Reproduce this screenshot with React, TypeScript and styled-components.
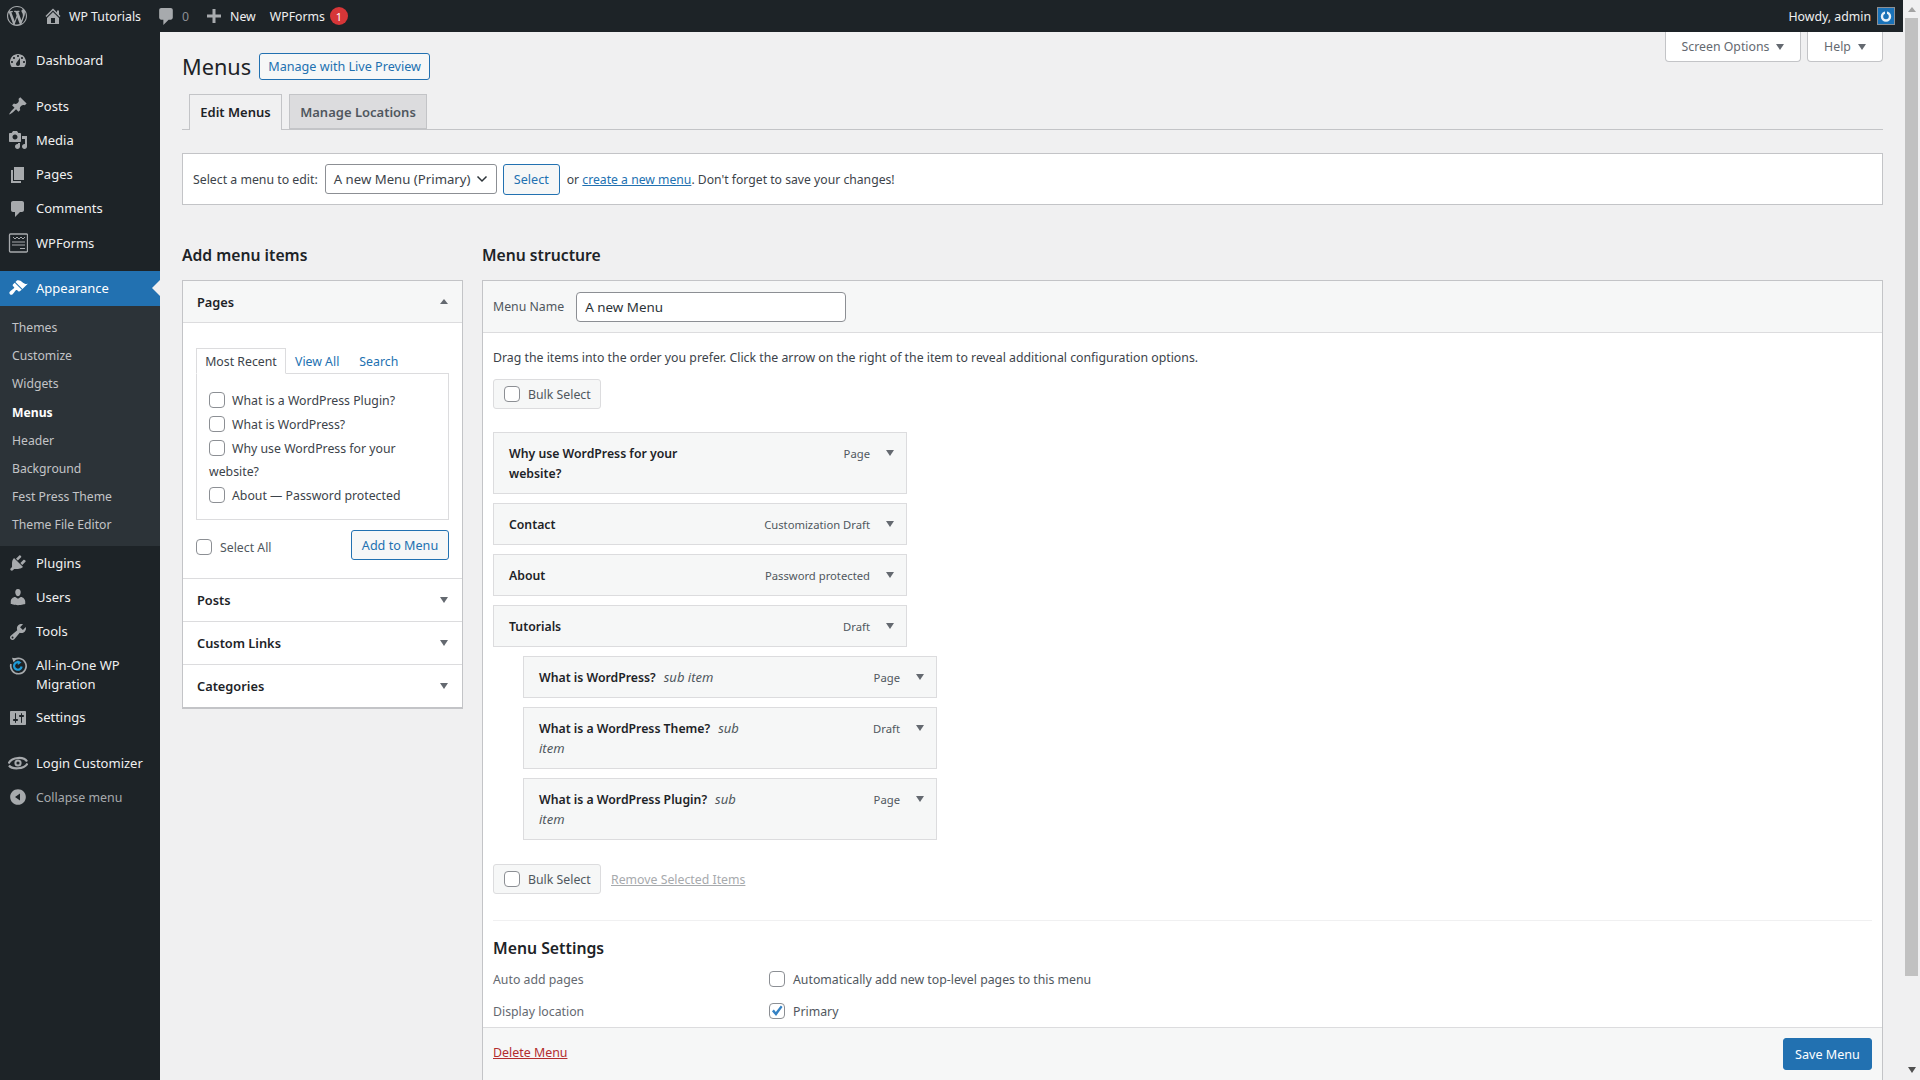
import React from 'react'
import styled, { createGlobalStyle } from 'styled-components'

const FONT = '"Noto Sans", "Open Sans", Arial, sans-serif'

const GlobalStyle = createGlobalStyle`
  html, body {
    margin: 0;
    height: 100%;
    overflow: hidden;
    background: #f0f0f1;
  }
  * {
    box-sizing: border-box;
  }
  body {
    font-family: ${FONT};
    font-size: 12.3px;
    color: #3c434a;
  }
`

const Page = styled.div`
  display: flex;
  width: 1920px;
  height: 1080px;
  overflow: hidden;
`

const Screen = styled.div`
  flex: 1;
  min-width: 0;
  display: flex;
  flex-direction: column;
`

const Scrollbar = styled.div`
  width: 17px;
  display: flex;
  flex-direction: column;
  align-items: center;
  padding-top: 7px;
  background: #f0f0f1;
`

const ScrollThumb = styled.div`
  width: 13px;
  height: 958px;
  margin: 6px 0 91px;
  background: #c1c1c1;
`

const Caret = styled.span<{ $up?: boolean; $color?: string }>`
  display: inline-block;
  flex: none;
  width: 0;
  height: 0;
  border-left: 4px solid transparent;
  border-right: 4px solid transparent;
  ${({ $up, $color }) =>
    $up
      ? `border-bottom: 5px solid ${$color || '#646970'};`
      : `border-top: 6px solid ${$color || '#646970'};`}
`

/* admin bar */
const AdminBar = styled.header`
  flex: none;
  height: 32px;
  display: flex;
  align-items: center;
  padding: 0 8px 0 7px;
  background: #1d2327;
  color: #f0f0f1;
`

const BarIcon = styled.svg<{ $size?: number; $left?: number }>`
  flex: none;
  width: ${({ $size }) => $size || 20}px;
  height: ${({ $size }) => $size || 20}px;
  margin-left: ${({ $left }) => $left || 0}px;
  fill: #a7aaad;
`

const BarText = styled.span<{ $left?: number; $muted?: boolean }>`
  margin-left: ${({ $left }) => $left || 0}px;
  color: ${({ $muted }) => ($muted ? '#8c8f94' : '#f0f0f1')};
  white-space: nowrap;
`

const Badge = styled.span`
  width: 18px;
  height: 18px;
  margin-left: 5px;
  display: flex;
  align-items: center;
  justify-content: center;
  border-radius: 50%;
  background: #d63638;
  color: #fff;
  font-size: 11px;
`

const BarRight = styled.div`
  margin-left: auto;
  display: flex;
  align-items: center;
  gap: 6px;
`

const Avatar = styled.svg`
  width: 18px;
  height: 18px;
  display: block;
`

const Body = styled.div`
  flex: 1;
  min-height: 0;
  display: flex;
`

/* sidebar */
const Sidebar = styled.nav`
  flex: none;
  width: 160px;
  padding-top: 11.75px;
  background: #1d2327;
`

const NavItem = styled.div<{ $gap?: boolean; $active?: boolean; $tall?: boolean; $dim?: boolean }>`
  position: relative;
  display: flex;
  align-items: ${({ $tall }) => ($tall ? 'flex-start' : 'center')};
  gap: 8px;
  min-height: 34.25px;
  padding: ${({ $tall }) => ($tall ? '7px 8px' : '0 8px')};
  margin-top: ${({ $gap }) => ($gap ? 11 : 0)}px;
  background: ${({ $active }) => ($active ? '#2271b1' : 'transparent')};
  color: ${({ $active, $dim }) => ($active ? '#fff' : $dim ? '#a7aaad' : '#f0f0f1')};
  font-size: ${({ $dim }) => ($dim ? 12.4 : 13)}px;
  line-height: 19px;
`

const NavIcon = styled.svg<{ $active?: boolean }>`
  flex: none;
  width: 20px;
  height: 20px;
  fill: ${({ $active }) => ($active ? '#fff' : '#a7aaad')};
`

const ActiveArrow = styled.span`
  position: absolute;
  right: 0;
  top: 50%;
  margin-top: -8px;
  border: 8px solid transparent;
  border-right-color: #f0f0f1;
  border-left-width: 0;
`

const SubMenu = styled.div`
  padding: 8px 0 7px;
  background: #2c3338;
`

const SubItem = styled.div<{ $current?: boolean }>`
  height: 28.2px;
  padding-left: 12px;
  display: flex;
  align-items: center;
  font-size: 12.2px;
  color: ${({ $current }) => ($current ? '#fff' : '#c3c4c7')};
  font-weight: ${({ $current }) => ($current ? 700 : 400)};
`

/* content */
const Content = styled.main`
  flex: 1;
  min-width: 0;
  padding: 0 20px 0 22px;
`

const HeaderRow = styled.div`
  display: flex;
  justify-content: space-between;
  align-items: flex-start;
  height: 62px;
`

const TitleGroup = styled.div`
  display: flex;
  align-items: center;
  gap: 8px;
  margin-top: 21px;
`

const PageTitle = styled.h1`
  margin: 0;
  font-size: 21.7px;
  font-weight: 400;
  line-height: 27px;
  color: #1d2327;
`

const Button = styled.button<{ $height?: number; $width?: number }>`
  flex: none;
  width: ${({ $width }) => ($width ? `${$width}px` : 'auto')};
  height: ${({ $height }) => $height || 30}px;
  padding: 0;
  border: 1px solid #2271b1;
  border-radius: 3px;
  background: #f6f7f7;
  color: #2271b1;
  font-family: ${FONT};
  font-size: 12.6px;
  white-space: nowrap;
`

const PrimaryButton = styled(Button)`
  height: 32px;
  width: 89px;
  background: #2271b1;
  color: #fff;
`

const ScreenMeta = styled.div`
  display: flex;
  gap: 6px;
`

const MetaTab = styled.div<{ $width: number }>`
  width: ${({ $width }) => $width}px;
  height: 30px;
  display: flex;
  align-items: center;
  justify-content: center;
  gap: 7px;
  border: 1px solid #c3c4c7;
  border-top: none;
  border-radius: 0 0 4px 4px;
  background: #fff;
  color: #646970;
`

const TabRow = styled.div`
  display: flex;
  gap: 7px;
  height: 36px;
  padding-left: 7px;
  border-bottom: 1px solid #c3c4c7;
`

const NavTab = styled.div<{ $active?: boolean; $width: number }>`
  width: ${({ $width }) => $width}px;
  height: ${({ $active }) => ($active ? 36 : 35)}px;
  padding-bottom: ${({ $active }) => ($active ? 1 : 0)}px;
  display: flex;
  align-items: center;
  justify-content: center;
  border: 1px solid #c3c4c7;
  border-bottom: ${({ $active }) => ($active ? 'none' : '1px solid #c3c4c7')};
  background: ${({ $active }) => ($active ? '#f0f0f1' : '#dcdcde')};
  color: ${({ $active }) => ($active ? '#1d2327' : '#50575e')};
  font-size: 13px;
  font-weight: 600;
`

const ManageBox = styled.div`
  height: 52px;
  margin-top: 23px;
  padding-left: 10px;
  display: flex;
  align-items: center;
  border: 1px solid #c3c4c7;
  background: #fff;
`

const SelectBox = styled.div`
  width: 172px;
  height: 30px;
  margin: 0 6px 0 7px;
  padding: 0 8px 0 8px;
  display: flex;
  align-items: center;
  justify-content: space-between;
  border: 1px solid #8c8f94;
  border-radius: 3px;
  background: #fff;
  font-size: 13.2px;
  white-space: nowrap;
`

const TextLink = styled.a<{ $color?: string }>`
  color: ${({ $color }) => $color || '#2271b1'};
  text-decoration: underline;
`

const ManageText = styled.span`
  margin-left: 7px;
  font-size: 12.2px;
  white-space: pre;
`

const Columns = styled.div`
  display: flex;
  gap: 19px;
  margin-top: 38px;
`

const LeftColumn = styled.section`
  flex: none;
  width: 281px;
`

const RightColumn = styled.section`
  flex: 1;
  min-width: 0;
`

const ColumnTitle = styled.h2`
  height: 24px;
  margin: 0 0 13px;
  font-size: 15.7px;
  font-weight: 600;
  line-height: 24px;
  color: #1d2327;
`

const Accordion = styled.div`
  border: 1px solid #c3c4c7;
  border-bottom-width: 2px;
  background: #fff;
`

const AccordionHead = styled.div<{ $open?: boolean }>`
  height: ${({ $open }) => ($open ? 42 : 43)}px;
  padding: 0 14px;
  display: flex;
  align-items: center;
  justify-content: space-between;
  border-top: ${({ $open }) => ($open ? 'none' : '1px solid #dcdcde')};
  border-bottom: ${({ $open }) => ($open ? '1px solid #dcdcde' : 'none')};
  background: ${({ $open }) => ($open ? '#f6f7f7' : '#fff')};
  color: #1d2327;
  font-size: 12.8px;
  font-weight: 600;
`

const AccordionBody = styled.div`
  height: 255px;
  padding: 25px 13px 0;
`

const PickerTabs = styled.div`
  display: flex;
  align-items: flex-end;
  height: 25px;
`

const PickerTab = styled.div<{ $active?: boolean; $left?: number }>`
  height: 26px;
  margin-left: ${({ $left }) => $left || 0}px;
  margin-bottom: -1px;
  display: flex;
  align-items: center;
  ${({ $active }) =>
    $active
      ? 'position: relative; width: 90px; justify-content: center; border: 1px solid #dcdcde; border-bottom-color: #fff; background: #fff; color: #3c434a;'
      : 'color: #2271b1;'}
`

const Checklist = styled.div`
  height: 147px;
  padding: 15px 12px 0;
  border: 1px solid #dcdcde;
  line-height: 23.75px;
`

const CheckRow = styled.div`
  width: 228px;
`

const CheckBox = styled.input.attrs({ type: 'checkbox' })`
  appearance: none;
  display: inline-block;
  position: relative;
  width: 16px;
  height: 16px;
  flex: none;
  margin: 0 7px 0 0;
  vertical-align: -3px;
  border: 1px solid #8c8f94;
  border-radius: 4px;
  background: #fff;

  &:checked::before {
    content: '';
    position: absolute;
    inset: 1px;
    background: #3582c4;
    clip-path: polygon(8% 52%, 24% 38%, 40% 58%, 82% 4%, 96% 16%, 42% 92%);
  }
`

const PickerFoot = styled.div`
  display: flex;
  justify-content: space-between;
  margin-top: 10px;
`

const CheckLabel = styled.label`
  display: flex;
  align-items: center;
  color: #50575e;

  & > input {
    margin-right: 8px;
  }
`

const SelectAll = styled(CheckLabel)`
  margin-top: 4px;
`

const MenuBox = styled.div`
  border: 1px solid #c3c4c7;
  background: #fff;
`

const NameBar = styled.div`
  height: 52px;
  padding: 0 10px;
  display: flex;
  align-items: center;
  gap: 12px;
  border-bottom: 1px solid #dcdcde;
  background: #f6f7f7;
  color: #50575e;
`

const NameInput = styled.input`
  width: 270px;
  height: 30px;
  padding: 0 8px;
  border: 1px solid #8c8f94;
  border-radius: 4px;
  background: #fff;
  color: #2c3338;
  font-family: ${FONT};
  font-size: 13.4px;
`

const MenuBody = styled.div`
  padding: 15px 10px 0;
`

const Hint = styled.p`
  margin: 0;
  line-height: 20px;
  color: #3c434a;
`

const BulkRow = styled.div<{ $top: number }>`
  display: flex;
  align-items: center;
  gap: 10px;
  margin-top: ${({ $top }) => $top}px;
`

const BulkBox = styled(CheckLabel)`
  width: 108px;
  height: 30px;
  padding-left: 10px;
  border: 1px solid #dcdcde;
  border-radius: 3px;
  background: #f6f7f7;
`

const MenuList = styled.div`
  display: flex;
  flex-direction: column;
  gap: 9px;
  margin-top: 23px;
`

const MenuRow = styled.div<{ $sub?: boolean }>`
  width: 414px;
  margin-left: ${({ $sub }) => ($sub ? 30 : 0)}px;
  padding: 10px 12px 10px 15px;
  display: flex;
  justify-content: space-between;
  border: 1px solid #dcdcde;
  background: #f6f7f7;
`

const MenuTitle = styled.div`
  width: 210px;
  padding-top: 1px;
  margin-bottom: -1px;
  font-size: 12.25px;
  font-weight: 600;
  line-height: 20px;
  color: #1d2327;
`

const SubLabel = styled.em`
  margin-left: 8px;
  font-size: 13px;
  font-weight: 400;
  line-height: 1;
  color: #50575e;
`

const MenuControls = styled.div`
  height: 20px;
  display: flex;
  align-items: center;
  gap: 16px;
  font-size: 11.25px;
  color: #50575e;
  white-space: nowrap;
`

const Divider = styled.hr`
  height: 1px;
  margin: 26px 0 15px;
  border: none;
  background: #f0f0f1;
`

const SettingsTitle = styled.h3`
  height: 24px;
  margin: 0 0 9px;
  font-size: 15.8px;
  font-weight: 600;
  line-height: 24px;
  color: #1d2327;
`

const SettingRow = styled.div`
  display: flex;
  align-items: center;
  height: 20px;
  margin-bottom: 12px;
`

const SettingName = styled.div`
  width: 276px;
  color: #646970;
`

const MenuFoot = styled.div`
  height: 70px;
  margin-top: -6px;
  padding: 10px 10px 0;
  display: flex;
  justify-content: space-between;
  border-top: 1px solid #dcdcde;
  background: #f6f7f7;
`

const DeleteLink = styled(TextLink)`
  margin-top: 6px;
  font-size: 12.4px;
`

const ICONS: Record<string, string> = {
  wordpress:
    'M20 10c0-5.51-4.49-10-10-10C4.48 0 0 4.49 0 10c0 5.52 4.48 10 10 10 5.51 0 10-4.48 10-10zM7.78 15.37L4.37 6.22c.55-.02 1.17-.08 1.17-.08.5-.06.44-1.13-.06-1.11 0 0-1.45.11-2.37.11-.18 0-.37 0-.58-.01C4.12 2.69 6.87 1.07 10 1.07c2.33 0 4.45.87 6.05 2.34-.68-.11-1.65.39-1.65 1.58 0 .74.45 1.36.9 2.1.35.61.55 1.36.55 2.46 0 1.49-1.4 5-1.4 5l-3.03-8.37c.54-.02.82-.17.82-.17.5-.05.44-1.25-.06-1.22 0 0-1.44.12-2.38.12-.87 0-2.33-.12-2.33-.12-.5-.03-.56 1.2-.06 1.22l.92.08 1.26 3.41zM17.41 10c.24-.64.74-1.87.43-4.25.7 1.29 1.05 2.71 1.05 4.25 0 3.29-1.73 6.24-4.4 7.78.97-2.59 1.94-5.2 2.92-7.78zM6.1 18.09C3.12 16.65 1.11 13.53 1.11 10c0-1.3.23-2.48.72-3.58C3.25 10.32 4.67 14.21 6.1 18.09zm4.03-6.96l2.58 6.98c-.86.31-1.78.48-2.71.48-.79 0-1.55-.11-2.26-.32.8-2.38 1.59-4.75 2.39-7.14z',
  home: 'M16 8.5l1.53 1.53-1.06 1.06L10 4.62l-6.47 6.47-1.06-1.06L10 2.5l4 4v-2h2v4zm-6-2.46l6 5.99V18H4v-5.97zM12 17v-5H8v5h4z',
  comment: 'M5 2h9c1.1 0 2 .9 2 2v7c0 1.1-.9 2-2 2h-2l-5 5v-5H5c-1.1 0-2-.9-2-2V4c0-1.1.9-2 2-2z',
  plus: 'M3 8.5h5.5V3h3v5.5H17v3h-5.500V17h-3v-5.500H3z',
  dashboard:
    'M3.76 16h12.48c1.1-1.37 1.76-3.11 1.76-5 0-4.42-3.58-8-8-8s-8 3.58-8 8c0 1.89.66 3.63 1.76 5zM10 4c.55 0 1 .45 1 1s-.45 1-1 1-1-.45-1-1 .45-1 1-1zM6 6c.55 0 1 .45 1 1s-.45 1-1 1-1-.45-1-1 .45-1 1-1zm8 0c.55 0 1 .45 1 1s-.45 1-1 1-1-.45-1-1 .45-1 1-1zm-5.37 5.55L12 7v6c0 1.1-.9 2-2 2s-2-.9-2-2c0-.57.24-1.08.63-1.45zM4 10c.55 0 1 .45 1 1s-.45 1-1 1-1-.45-1-1 .45-1 1-1zm12 0c.55 0 1 .45 1 1s-.45 1-1 1-1-.45-1-1 .45-1 1-1z',
  post: 'M10.44 3.02l1.82-1.82 6.36 6.35-1.83 1.82c-1.05-.68-2.48-.57-3.41.36l-.75.75c-.92.93-1.04 2.35-.35 3.41l-1.83 1.82-2.41-2.41-2.8 2.79c-.42.42-3.38 2.71-3.8 2.29s1.86-3.39 2.28-3.81l2.79-2.79L4.1 9.36l1.83-1.82c1.05.69 2.48.57 3.4-.36l.75-.75c.93-.92 1.05-2.35.36-3.41z',
  media:
    'M13 11V4c0-.55-.45-1-1-1h-1.67L9 1H5L3.67 3H2c-.55 0-1 .45-1 1v7c0 .55.45 1 1 1h10c.55 0 1-.45 1-1zM7 4.5c1.38 0 2.5 1.12 2.5 2.5S8.38 9.5 7 9.5 4.5 8.38 4.5 7 5.62 4.5 7 4.5zM14 6h5v10.5c0 1.38-1.12 2.5-2.5 2.5S14 17.88 14 16.5s1.12-2.5 2.5-2.5c.17 0 .34.02.5.05V9h-3V6zm-4 8.05V13h2v3.5c0 1.38-1.12 2.5-2.5 2.5S7 17.88 7 16.5 8.12 14 9.5 14c.17 0 .34.02.5.05z',
  page: 'M6 15V2h10v13H6zm-1 1h8v2H3V5h2v11z',
  appearance:
    'M14.48 11.06L7.41 3.99l1.5-1.5c.5-.56 2.3-.47 3.51.32 1.21.8 1.43 1.28 2.91 2.1 1.18.64 2.45 1.26 4.45.85zm-.71.71L6.7 4.7 4.93 6.47c-.39.39-.39 1.02 0 1.41l1.06 1.06c.39.39.39 1.03 0 1.42-.6.6-1.43 1.11-2.21 1.7-.79.58-1.37 1.12-1.99 1.74-.62.62-.52 1.73.17 2.42.69.69 1.8.79 2.42.17.62-.62 1.16-1.2 1.74-1.99.59-.78 1.1-1.61 1.7-2.21.39-.39 1.03-.39 1.42 0l1.06 1.06c.39.39 1.02.39 1.41 0z',
  plugins:
    'M13.11 4.36L9.87 7.6 8 5.73l3.24-3.24c.35-.34 1.05-.2 1.56.32.52.51.66 1.21.31 1.55zm-8 1.77l.91-1.12 9.01 9.01-1.19.84c-.71.71-2.63 1.16-3.82 1.16H6.14L4.9 17.26c-.59.59-1.54.59-2.12 0-.59-.58-.59-1.53 0-2.12l1.24-1.24v-3.88c0-1.13.4-3.19 1.09-3.89zm7.26 3.97l3.24-3.24c.34-.35 1.04-.21 1.55.31.52.51.66 1.21.31 1.55l-3.24 3.25z',
  users:
    'M10 9.25c-2.27 0-2.73-3.44-2.73-3.44C7 4.02 7.82 2 9.97 2c2.16 0 2.98 2.02 2.71 3.81 0 0-.41 3.44-2.68 3.44zm0 2.57L12.72 10c2.39 0 4.52 2.33 4.52 4.53v2.49s-3.65 1.13-7.24 1.13c-3.65 0-7.24-1.13-7.24-1.13v-2.49c0-2.25 1.94-4.48 4.47-4.48z',
  tools:
    'M16.68 9.77c-1.34 1.34-3.3 1.67-4.95.99l-5.41 6.52c-.99.99-2.59.99-3.58 0s-.99-2.59 0-3.57l6.52-5.42c-.68-1.65-.35-3.61.99-4.95 1.28-1.28 3.12-1.62 4.72-1.06l-2.89 2.89 2.82 2.82 2.86-2.87c.53 1.58.18 3.39-1.08 4.65zM3.81 16.21c.4.39 1.04.39 1.43 0 .4-.4.4-1.04 0-1.43-.39-.4-1.03-.4-1.43 0-.39.39-.39 1.03 0 1.43z',
  settings:
    'M18 16V4c0-.55-.45-1-1-1H3c-.55 0-1 .45-1 1v12c0 .55.45 1 1 1h14c.55 0 1-.45 1-1zM8 11h1c.55 0 1 .45 1 1s-.45 1-1 1H8v1.500c0 .28-.22.5-.5.5s-.5-.22-.5-.5V13H6c-.55 0-1-.45-1-1s.45-1 1-1h1V5.500c0-.28.22-.5.5-.5s.5.22.5.5V11zm5-2h-1c-.55 0-1-.45-1-1s.45-1 1-1h1V5.500c0-.28.22-.5.5-.5s.5.22.5.5V7h1c.55 0 1 .45 1 1s-.45 1-1 1h-1v5.500c0 .28-.22.5-.5.5s-.5-.22-.5-.5V9z',
  collapse: 'M10 2.160c4.330 0 7.840 3.510 7.840 7.840s-3.510 7.840-7.840 7.840S2.160 14.330 2.160 10 5.670 2.160 10 2.160zM12 13.500v-7L7 10z',
}

const Icon = ({ name, as: Comp = NavIcon, ...rest }: { name: string; as?: any; [key: string]: any }) => (
  <Comp viewBox="0 0 20 20" {...rest}>
    <path fillRule="evenodd" d={ICONS[name]} />
  </Comp>
)

const FormsIcon = () => (
  <NavIcon viewBox="0 0 20 20">
    <g fill="none" stroke="#a7aaad">
      <rect x="1.500" y="1" width="18" height="18" rx="1" strokeWidth="1.300" />
      <path d="M5 4l2 2 2-2 2 2 2-2 2 2 2-2" strokeWidth="1" />
      <path d="M4 9h13M4 12h13M12 15.500h5" strokeWidth="1.200" />
    </g>
  </NavIcon>
)

const MigrationIcon = () => (
  <NavIcon viewBox="0 0 20 20">
    <path d="M5.200 4.400A7.700 7.700 0 1 1 3 8" fill="none" stroke="#a7aaad" strokeWidth="1.700" />
    <path d="M4 1.800 9 2.400 5.600 6.200z" />
    <path d="M13.600 10.500A3.800 3.800 0 1 1 11.200 6.400" fill="none" stroke="#1e9bd8" strokeWidth="2.200" />
    <path d="M9.500 4.200 13.500 6.500 9.800 8.900z" fill="#1e9bd8" />
  </NavIcon>
)

const LoginIcon = () => (
  <NavIcon viewBox="0 0 20 20">
    <g fill="none" stroke="#a7aaad">
      <path d="M0.500 10.500C4 3.500 16 3.500 19 8.500" strokeWidth="2.200" />
      <path d="M19.500 10.500C16 16.500 4 16.500 1 12.500" strokeWidth="2.200" />
      <circle cx="10" cy="10" r="2.600" strokeWidth="2" />
    </g>
  </NavIcon>
)

const navTop = [
  { icon: 'post', label: 'Posts', gap: true },
  { icon: 'media', label: 'Media' },
  { icon: 'page', label: 'Pages' },
  { icon: 'comment', label: 'Comments' },
]

const subItems = ['Themes', 'Customize', 'Widgets', 'Menus', 'Header', 'Background', 'Fest Press Theme', 'Theme File Editor']

const menuRows = [
  { title: 'Why use WordPress for your website?', type: 'Page' },
  { title: 'Contact', type: 'Customization Draft' },
  { title: 'About', type: 'Password protected' },
  { title: 'Tutorials', type: 'Draft' },
  { title: 'What is WordPress?', type: 'Page', sub: true },
  { title: 'What is a WordPress Theme?', type: 'Draft', sub: true },
  { title: 'What is a WordPress Plugin?', type: 'Page', sub: true },
]

const App = () => (
  <Page>
    <GlobalStyle />
    <Screen>
      <AdminBar>
        <Icon name="wordpress" as={BarIcon} />
        <Icon name="home" as={BarIcon} $left={16} />
        <BarText $left={6}>WP Tutorials</BarText>
        <Icon name="comment" as={BarIcon} $size={21} $left={15} />
        <BarText $left={5} $muted>0</BarText>
        <Icon name="plus" as={BarIcon} $left={15} />
        <BarText $left={6}>New</BarText>
        <BarText $left={14}>WPForms</BarText>
        <Badge>1</Badge>
        <BarRight>
          <BarText>Howdy, admin</BarText>
          <Avatar viewBox="0 0 18 18">
            <rect x="0.5" y="0.5" width="17" height="17" fill="#1a72b8" stroke="#8c8f94" />
            <circle cx="9" cy="9.500" r="4" fill="none" stroke="#e8f1f8" strokeWidth="2.400" />
            <rect x="8" y="3.500" width="2" height="4.500" fill="#1a72b8" />
          </Avatar>
        </BarRight>
      </AdminBar>
      <Body>
        <Sidebar>
          <NavItem>
            <Icon name="dashboard" />
            Dashboard
          </NavItem>
          {navTop.map((item) => (
            <NavItem key={item.label} $gap={item.gap}>
              <Icon name={item.icon} />
              {item.label}
            </NavItem>
          ))}
          <NavItem>
            <FormsIcon />
            WPForms
          </NavItem>
          <NavItem $gap $active>
            <Icon name="appearance" $active />
            Appearance
            <ActiveArrow />
          </NavItem>
          <SubMenu>
            {subItems.map((label) => (
              <SubItem key={label} $current={label === 'Menus'}>
                {label}
              </SubItem>
            ))}
          </SubMenu>
          <NavItem>
            <Icon name="plugins" />
            Plugins
          </NavItem>
          <NavItem>
            <Icon name="users" />
            Users
          </NavItem>
          <NavItem>
            <Icon name="tools" />
            Tools
          </NavItem>
          <NavItem $tall>
            <MigrationIcon />
            <span>
              All-in-One WP
              <br />
              Migration
            </span>
          </NavItem>
          <NavItem>
            <Icon name="settings" />
            Settings
          </NavItem>
          <NavItem $gap>
            <LoginIcon />
            Login Customizer
          </NavItem>
          <NavItem $dim>
            <Icon name="collapse" />
            Collapse menu
          </NavItem>
        </Sidebar>
        <Content>
          <HeaderRow>
            <TitleGroup>
              <PageTitle>Menus</PageTitle>
              <Button $height={27} $width={171}>Manage with Live Preview</Button>
            </TitleGroup>
            <ScreenMeta>
              <MetaTab $width={136}>
                Screen Options <Caret />
              </MetaTab>
              <MetaTab $width={76}>
                Help <Caret />
              </MetaTab>
            </ScreenMeta>
          </HeaderRow>
          <TabRow>
            <NavTab $active $width={93}>Edit Menus</NavTab>
            <NavTab $width={138}>Manage Locations</NavTab>
          </TabRow>
          <ManageBox>
            Select a menu to edit:
            <SelectBox>
              A new Menu (Primary)
              <svg width="12" height="8" viewBox="0 0 12 8">
                <path d="M1.500 1.500 6 6l4.500-4.500" fill="none" stroke="#2c3338" strokeWidth="1.500" />
              </svg>
            </SelectBox>
            <Button $height={31} $width={57}>Select</Button>
            <ManageText>
              or <TextLink>create a new menu</TextLink>. Don't forget to save your changes!
            </ManageText>
          </ManageBox>
          <Columns>
            <LeftColumn>
              <ColumnTitle>Add menu items</ColumnTitle>
              <Accordion>
                <AccordionHead $open>
                  Pages
                  <Caret $up />
                </AccordionHead>
                <AccordionBody>
                  <PickerTabs>
                    <PickerTab $active>Most Recent</PickerTab>
                    <PickerTab $left={9}>View All</PickerTab>
                    <PickerTab $left={20}>Search</PickerTab>
                  </PickerTabs>
                  <Checklist>
                    <CheckRow>
                      <CheckBox />
                      What is a WordPress Plugin?
                    </CheckRow>
                    <CheckRow>
                      <CheckBox />
                      What is WordPress?
                    </CheckRow>
                    <CheckRow>
                      <CheckBox />
                      Why use WordPress for your website?
                    </CheckRow>
                    <CheckRow>
                      <CheckBox />
                      About — Password protected
                    </CheckRow>
                  </Checklist>
                  <PickerFoot>
                    <SelectAll>
                      <CheckBox />
                      Select All
                    </SelectAll>
                    <Button $width={98}>Add to Menu</Button>
                  </PickerFoot>
                </AccordionBody>
                {['Posts', 'Custom Links', 'Categories'].map((label) => (
                  <AccordionHead key={label}>
                    {label}
                    <Caret />
                  </AccordionHead>
                ))}
              </Accordion>
            </LeftColumn>
            <RightColumn>
              <ColumnTitle>Menu structure</ColumnTitle>
              <MenuBox>
                <NameBar>
                  Menu Name
                  <NameInput defaultValue="A new Menu" />
                </NameBar>
                <MenuBody>
                  <Hint>
                    Drag the items into the order you prefer. Click the arrow on the right of the item to reveal
                    additional configuration options.
                  </Hint>
                  <BulkRow $top={11}>
                    <BulkBox>
                      <CheckBox />
                      Bulk Select
                    </BulkBox>
                  </BulkRow>
                  <MenuList>
                    {menuRows.map((row) => (
                      <MenuRow key={row.title} $sub={row.sub}>
                        <MenuTitle>
                          {row.title}
                          {row.sub && <SubLabel>sub item</SubLabel>}
                        </MenuTitle>
                        <MenuControls>
                          {row.type}
                          <Caret />
                        </MenuControls>
                      </MenuRow>
                    ))}
                  </MenuList>
                  <BulkRow $top={24}>
                    <BulkBox>
                      <CheckBox />
                      Bulk Select
                    </BulkBox>
                    <TextLink $color="#a7aaad">Remove Selected Items</TextLink>
                  </BulkRow>
                  <Divider />
                  <SettingsTitle>Menu Settings</SettingsTitle>
                  <SettingRow>
                    <SettingName>Auto add pages</SettingName>
                    <CheckLabel>
                      <CheckBox />
                      Automatically add new top-level pages to this menu
                    </CheckLabel>
                  </SettingRow>
                  <SettingRow>
                    <SettingName>Display location</SettingName>
                    <CheckLabel>
                      <CheckBox defaultChecked />
                      Primary
                    </CheckLabel>
                  </SettingRow>
                </MenuBody>
                <MenuFoot>
                  <DeleteLink $color="#b32d2e">Delete Menu</DeleteLink>
                  <PrimaryButton>Save Menu</PrimaryButton>
                </MenuFoot>
              </MenuBox>
            </RightColumn>
          </Columns>
        </Content>
      </Body>
    </Screen>
    <Scrollbar>
      <Caret $up $color="#a3a3a3" />
      <ScrollThumb />
      <Caret $color="#505050" />
    </Scrollbar>
  </Page>
)

export default App
